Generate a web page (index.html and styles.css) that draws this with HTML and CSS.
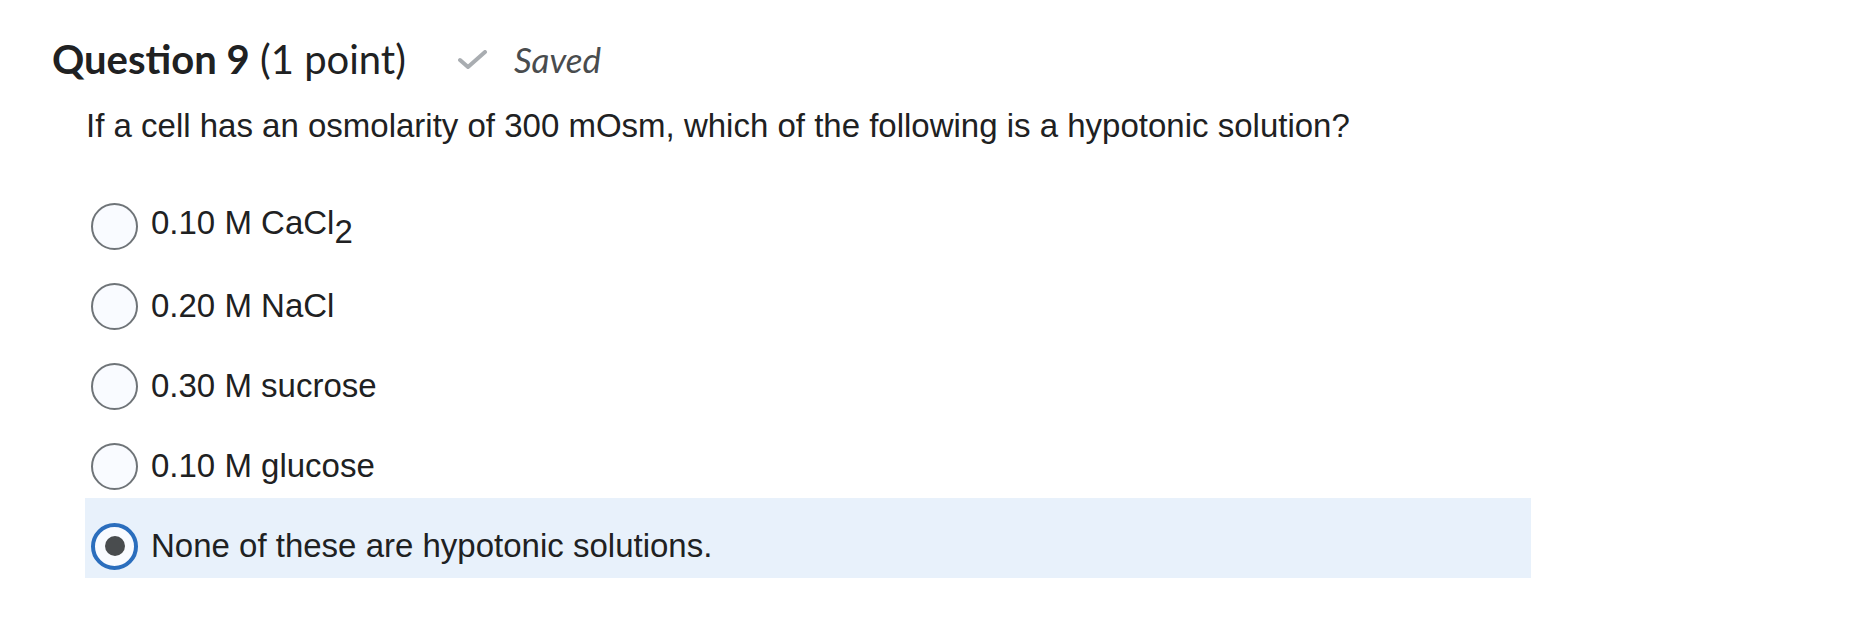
FILE: index.html
```html
<!DOCTYPE html>
<html lang="en">

<head>
    <meta charset="UTF-8">
    <meta name="viewport" content="width=device-width, initial-scale=1.0">
    <title>Question 9</title>
    <link rel="stylesheet" href="styles.css">
</head>

<body>
    <div class="quiz">
        <div class="question-header">
            <h2 class="question-title"><strong>Question 9</strong> (1 point)</h2>
            <div class="save-status">
                <svg class="check" width="30" height="20" viewBox="0 0 30 20" aria-hidden="true">
                    <polyline points="2,10 10,17 27,2" fill="none" stroke="#a9adb1" stroke-width="4" stroke-linecap="round" stroke-linejoin="round" />
                </svg>
                <span class="saved">Saved</span>
            </div>
        </div>

        <div class="question-body">
            <p class="question-text">If a cell has an osmolarity of 300 mOsm, which of the following is a hypotonic solution?</p>

            <ul class="answers">
                <li class="answer">
                    <span class="radio"></span>
                    <span class="answer-label">0.10 M CaCl<sub>2</sub></span>
                </li>
                <li class="answer">
                    <span class="radio"></span>
                    <span class="answer-label">0.20 M NaCl</span>
                </li>
                <li class="answer">
                    <span class="radio"></span>
                    <span class="answer-label">0.30 M sucrose</span>
                </li>
                <li class="answer">
                    <span class="radio"></span>
                    <span class="answer-label">0.10 M glucose</span>
                </li>
                <li class="answer selected">
                    <span class="radio"></span>
                    <span class="answer-label">None of these are hypotonic solutions.</span>
                </li>
            </ul>
        </div>
    </div>
</body>

</html>
```

FILE: styles.css
```css
body {
    margin: 0;
    background-color: #ffffff;
    color: #202122;
    font-family: "Liberation Sans", Arial, sans-serif;
}

.quiz {
    padding: 35px 0 0 52px;
}

.question-header {
    display: flex;
    align-items: center;
    gap: 52px;
}

.question-title {
    margin: 0;
    font-family: Lato, "Noto Sans", sans-serif;
    font-size: 40px;
    line-height: 48px;
    font-weight: 400;
    color: #202122;
}

.question-title strong {
    font-weight: 700;
}

.save-status {
    display: flex;
    align-items: center;
    gap: 26px;
}

.check {
    display: block;
    margin-top: 2px;
}

.saved {
    font-family: Lato, "Noto Sans", sans-serif;
    font-style: italic;
    font-size: 35px;
    color: #494c4e;
}

.question-body {
    margin-left: 33px;
    width: 1446px;
}

.question-text {
    margin: 23px 0 0;
    padding-left: 1px;
    font-size: 33px;
    line-height: 40px;
}

.answers {
    list-style: none;
    margin: 32px 0 0;
    padding: 0;
}

.answer {
    display: flex;
    align-items: center;
    gap: 13px;
    height: 80px;
    box-sizing: border-box;
    padding: 16px 0 0 6px;
    font-size: 33px;
    line-height: 40px;
}

.answer.selected {
    background-color: #e8f1fb;
}

.radio {
    flex: none;
    width: 47px;
    height: 47px;
    box-sizing: border-box;
    border: 2px solid #6f7478;
    border-radius: 50%;
    background-color: #f9fbff;
    display: flex;
    align-items: center;
    justify-content: center;
}

.answer.selected .radio {
    border: 4px solid #2b6ebd;
}

.answer.selected .radio::after {
    content: "";
    width: 20px;
    height: 20px;
    border-radius: 50%;
    background-color: #494c4e;
}

.answer-label sub {
    font-size: 1em;
    vertical-align: -0.28em;
    line-height: 1;
}
```
